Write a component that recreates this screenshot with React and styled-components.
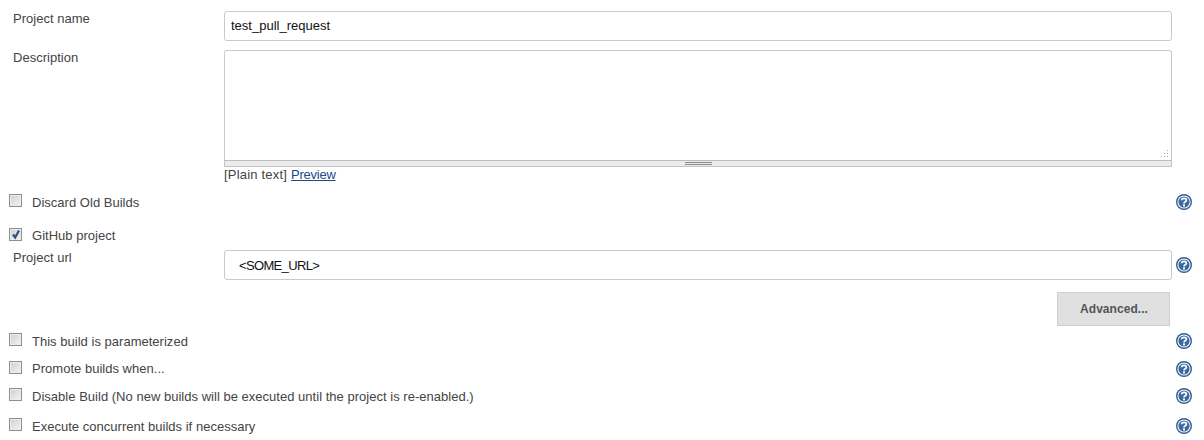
import styled, { createGlobalStyle } from "styled-components"

const GlobalStyle = createGlobalStyle`
	html, body {
		margin: 0;
		padding: 0;
		background: #ffffff;
	}
	body {
		font-family: "Liberation Sans", Arial, sans-serif;
		font-size: 13px;
		letter-spacing: 0.02px;
		color: #444444;
	}
`

const Form = styled.form`
	width: 1204px;
	height: 440px;
	padding-top: 11px;
	box-sizing: border-box;
	overflow: hidden;
`

const FieldRow = styled.div`
	display: grid;
	grid-template-columns: 224px 948px 32px;
	margin-bottom: ${(p) => p.$gap || 0}px;
`

const FieldLabel = styled.label`
	padding-left: 13px;
	line-height: 16px;
`

const TextInput = styled.div`
	height: 30px;
	box-sizing: border-box;
	border: 1px solid #c9c9c9;
	border-radius: 3px;
	padding-left: ${(p) => p.$indent}px;
	padding-bottom: ${(p) => p.$lift || 0}px;
	display: flex;
	align-items: center;
	color: #111111;
	letter-spacing: ${(p) => p.$spacing || 0}px;
`

const TextArea = styled.div`
	position: relative;
	height: 111px;
	box-sizing: border-box;
	border: 1px solid #c9c9c9;
	border-bottom-color: #bdbdbd;
	border-radius: 3px 3px 0 0;
`

const Corner = styled.svg`
	position: absolute;
	right: 2px;
	bottom: 1px;
`

const Grabber = styled.div`
	height: 6px;
	box-sizing: border-box;
	border: 1px solid #c4c4c4;
	border-top: 0;
	background: #ececec;
	display: flex;
	align-items: center;
	justify-content: center;
`

const GrabberLines = styled.div`
	width: 27px;
	height: 3px;
	box-sizing: border-box;
	border-top: 1px solid #8a8a8a;
	border-bottom: 1px solid #8a8a8a;
`

const EditorNote = styled.div`
	line-height: 15px;
	padding-bottom: 2px;
	letter-spacing: 0.2px;
	color: #444444;
`

const PreviewLink = styled.a`
	color: #204a87;
	text-decoration: underline;
	margin-left: 4px;
	letter-spacing: -0.25px;
`

const CheckRow = styled.div`
	display: grid;
	grid-template-columns: 1172px 32px;
	align-items: center;
	height: ${(p) => p.$height}px;
	margin-top: ${(p) => p.$top || 0}px;
`

const CheckLabel = styled.label`
	display: flex;
	align-items: center;
	padding-left: 9px;
`

const Box = styled.span`
	position: relative;
	width: 13px;
	height: 13px;
	box-sizing: border-box;
	margin-right: 10px;
	margin-top: -3px;
	border: 1px solid #8f8f8f;
	background: linear-gradient(135deg, #cfcfcf, #f4f4f4);
	box-shadow: inset 0 0 0 1px #ececec;
`

const Tick = styled.svg`
	position: absolute;
	left: 1px;
	top: 0;
`

const HelpCell = styled.div`
	display: flex;
	align-items: center;
	padding-left: 4px;
`

const ButtonRow = styled.div`
	display: flex;
	justify-content: flex-end;
	padding-right: 34px;
	margin-top: 12px;
`

const AdvancedButton = styled.button`
	width: 113px;
	height: 34px;
	border: 1px solid #cfcfcf;
	background: #e0e0e0;
	color: #555555;
	font-family: "Liberation Sans", Arial, sans-serif;
	font-size: 12px;
	font-weight: bold;
	letter-spacing: 0.05px;
	padding: 0 0 0 1px;
`

const HelpIcon = () => (
	<svg width="16" height="16" viewBox="0 0 16 16">
		<circle cx="8" cy="8" r="8" fill="#2f5d94" />
		<circle cx="8" cy="8" r="6.6" fill="#ffffff" />
		<circle cx="8" cy="8" r="5.6" fill="#3a689f" />
		<path d="M5.6 6.2 C5.8 3.8 10.4 3.8 10.4 6.2 C10.4 7.8 8 7.6 8 9.4" fill="none" stroke="#ffffff" strokeWidth="1.7" />
		<rect x="7" y="10.4" width="2" height="2" fill="#ffffff" />
	</svg>
)

const Check = ({ label, checked, height, top, help = true }) => (
	<CheckRow $height={height} $top={top}>
		<CheckLabel>
			<Box>
				{checked && (
					<Tick width="10" height="11" viewBox="0 0 10 11">
						<path d="M2 5.5 L4.2 8.5 L8 1.5" fill="none" stroke="#2f4f86" strokeWidth="2.2" />
					</Tick>
				)}
			</Box>
			{label}
		</CheckLabel>
		{help && (
			<HelpCell>
				<HelpIcon />
			</HelpCell>
		)}
	</CheckRow>
)

const App = () => {
	return (
		<Form>
			<GlobalStyle />
			<FieldRow $gap={9}>
				<FieldLabel>Project name</FieldLabel>
				<TextInput $indent={6} $lift={2}>test_pull_request</TextInput>
			</FieldRow>
			<FieldRow>
				<FieldLabel>Description</FieldLabel>
				<div>
					<TextArea>
						<Corner width="10" height="10" viewBox="0 0 10 10">
							<path d="M8 1h1v1H8zM5 4h1v1H5zM8 4h1v1H8zM2 7h1v1H2zM5 7h1v1H5zM8 7h1v1H8z" fill="#aaaaaa" />
						</Corner>
					</TextArea>
					<Grabber>
						<GrabberLines />
					</Grabber>
					<EditorNote>
						[Plain text]<PreviewLink href="#">Preview</PreviewLink>
					</EditorNote>
				</div>
			</FieldRow>
			<Check label="Discard Old Builds" height={28} top={4} />
			<Check label="GitHub project" checked height={29} top={5} help={false} />
			<FieldRow>
				<FieldLabel>Project url</FieldLabel>
				<TextInput $indent={14} $spacing={-0.65}>&lt;SOME_URL&gt;</TextInput>
				<HelpCell>
					<HelpIcon />
				</HelpCell>
			</FieldRow>
			<ButtonRow>
				<AdvancedButton type="button">Advanced...</AdvancedButton>
			</ButtonRow>
			<Check label="This build is parameterized" height={28} top={1} />
			<Check label="Promote builds when..." height={27} />
			<Check label="Disable Build (No new builds will be executed until the project is re-enabled.)" height={28} />
			<Check label="Execute concurrent builds if necessary" height={28} top={2} />
		</Form>
	)
}

export default App
